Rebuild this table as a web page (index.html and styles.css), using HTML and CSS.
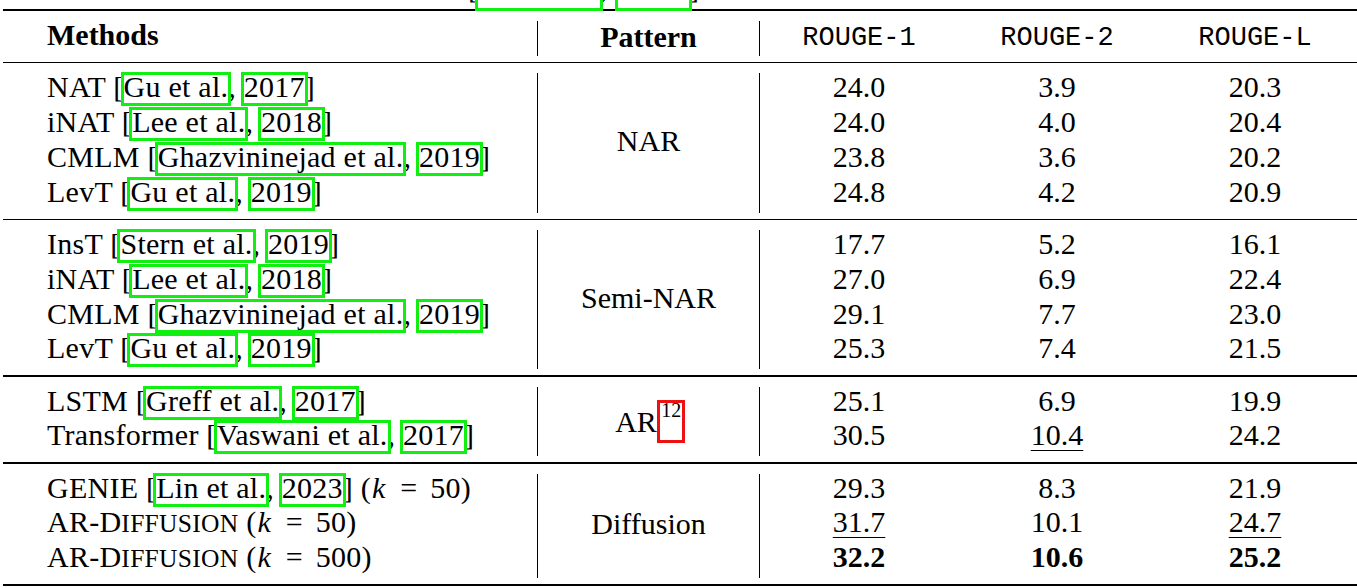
FILE: index.html
```html
<!doctype html>
<html lang="en">
<head>
  <meta charset="utf-8">
  <title>Results</title>
  <link rel="stylesheet" href="styles.css">
</head>
<body>
  <div class="sheet">
    <div class="caption">[<span class="cite cap wide">Rush et al.</span>, <span class="cite cap">2015</span>]</div>
    <div class="rule heavy top"></div>

    <div class="group">
      <div class="m b">Methods</div>
      <div class="p b">Pattern</div>
      <div class="n"><span class="tt">ROUGE-1</span></div>
      <div class="n"><span class="tt">ROUGE-2</span></div>
      <div class="n"><span class="tt">ROUGE-L</span></div>
    </div>
    <div class="rule"></div>

    <div class="group">
      <div class="m">NAT [<span class="cite">Gu et al.</span>, <span class="cite">2017</span>]</div>
      <div class="p r4">NAR</div>
      <div class="n">24.0</div><div class="n">3.9</div><div class="n">20.3</div>
      <div class="m">iNAT [<span class="cite">Lee et al.</span>, <span class="cite">2018</span>]</div>
      <div class="n">24.0</div><div class="n">4.0</div><div class="n">20.4</div>
      <div class="m">CMLM [<span class="cite">Ghazvininejad et al.</span>, <span class="cite">2019</span>]</div>
      <div class="n">23.8</div><div class="n">3.6</div><div class="n">20.2</div>
      <div class="m">LevT [<span class="cite">Gu et al.</span>, <span class="cite">2019</span>]</div>
      <div class="n">24.8</div><div class="n">4.2</div><div class="n">20.9</div>
    </div>
    <div class="rule"></div>

    <div class="group">
      <div class="m">InsT [<span class="cite">Stern et al.</span>, <span class="cite">2019</span>]</div>
      <div class="p r4">Semi-NAR</div>
      <div class="n">17.7</div><div class="n">5.2</div><div class="n">16.1</div>
      <div class="m">iNAT [<span class="cite">Lee et al.</span>, <span class="cite">2018</span>]</div>
      <div class="n">27.0</div><div class="n">6.9</div><div class="n">22.4</div>
      <div class="m">CMLM [<span class="cite">Ghazvininejad et al.</span>, <span class="cite">2019</span>]</div>
      <div class="n">29.1</div><div class="n">7.7</div><div class="n">23.0</div>
      <div class="m">LevT [<span class="cite">Gu et al.</span>, <span class="cite">2019</span>]</div>
      <div class="n">25.3</div><div class="n">7.4</div><div class="n">21.5</div>
    </div>
    <div class="rule"></div>

    <div class="group">
      <div class="m">LSTM [<span class="cite">Greff et al.</span>, <span class="cite">2017</span>]</div>
      <div class="p r2">AR<span class="fn">12</span></div>
      <div class="n">25.1</div><div class="n">6.9</div><div class="n">19.9</div>
      <div class="m">Transformer [<span class="cite">Vaswani et al.</span>, <span class="cite">2017</span>]</div>
      <div class="n">30.5</div><div class="n"><span class="u">10.4</span></div><div class="n">24.2</div>
    </div>
    <div class="rule"></div>

    <div class="group">
      <div class="m">GENIE [<span class="cite">Lin et al.</span>, <span class="cite">2023</span>] <span class="math">(<i>k</i> = 50)</span></div>
      <div class="p r3">Diffusion</div>
      <div class="n">29.3</div><div class="n">8.3</div><div class="n">21.9</div>
      <div class="m">AR-D<span class="sc">iffusion</span> <span class="math">(<i>k</i> = 50)</span></div>
      <div class="n"><span class="u">31.7</span></div><div class="n">10.1</div><div class="n"><span class="u">24.7</span></div>
      <div class="m">AR-D<span class="sc">iffusion</span> <span class="math">(<i>k</i> = 500)</span></div>
      <div class="n b">32.2</div><div class="n b">10.6</div><div class="n b">25.2</div>
    </div>
    <div class="rule heavy"></div>
  </div>
</body>
</html>
```

FILE: styles.css
```css
html, body {
  margin: 0;
  padding: 0;
  background: #fff;
}
body {
  font-family: "Liberation Serif", "Times New Roman", serif;
  font-size: 30px;
  color: #000;
  overflow: hidden;
}
.sheet {
  margin-left: 3px;
  width: 1354px;
}
.caption {
  height: 27px;
  line-height: 27px;
  margin-top: -26px;
  padding-left: 465px;
  white-space: nowrap;
}
.rule {
  height: 1.4px;
  background: #000;
}
.rule.heavy {
  height: 2.4px;
}
.rule.top {
  margin-top: 7.8px;
}
.group {
  display: grid;
  grid-template-columns: 534px 223px repeat(3, 198px);
  grid-auto-rows: 34.8px;
  margin: 10px 0 6px 0;
}
.m, .n {
  line-height: 27px;
  padding-bottom: 7.8px;
  white-space: nowrap;
}
.m {
  padding-left: 44px;
  letter-spacing: 0.25px;
}
.m.b {
  letter-spacing: 0;
}
.n {
  text-align: center;
}
.p {
  grid-column: 2;
  border-left: 1.4px solid #000;
  border-right: 1.4px solid #000;
  display: flex;
  align-items: center;
  justify-content: center;
  line-height: 27px;
  padding-bottom: 4px;
  white-space: nowrap;
}
.p.r2 { grid-row: span 2; padding: 0 0 0 3px; }
.p.r3 { grid-row: span 3; }
.p.r4 { grid-row: span 4; }
.b {
  font-weight: bold;
}
.tt {
  font-family: "Liberation Mono", "Courier New", monospace;
  font-size: 27px;
}
.u {
  text-decoration: underline;
  text-decoration-thickness: 1.4px;
  text-underline-offset: 5px;
}
.sc {
  font-size: 25.5px;
  text-transform: uppercase;
  letter-spacing: 0.3px;
}
.math {
  word-spacing: 5px;
}
.math i {
  padding: 0 2px 0 1px;
}
.cite {
  position: relative;
}
.cite::after {
  content: "";
  position: absolute;
  left: -3px;
  right: -3px;
  top: 2px;
  bottom: -3px;
  border: 3px solid #11ee11;
  pointer-events: none;
}
.cite.cap {
  display: inline-block;
  width: 71px;
  margin-left: 3px;
}
.cite.cap.wide {
  width: 122px;
  margin-left: 0;
}
.cite.cap::after {
  top: 0;
  bottom: -10px;
}
.fn {
  display: inline-block;
  box-sizing: border-box;
  width: 28px;
  height: 43px;
  border: 3px solid #ee1111;
  padding: 0.3px 0 0 1px;
  font-size: 20px;
  line-height: 14px;
  text-align: center;
  vertical-align: 13px;
}
```
